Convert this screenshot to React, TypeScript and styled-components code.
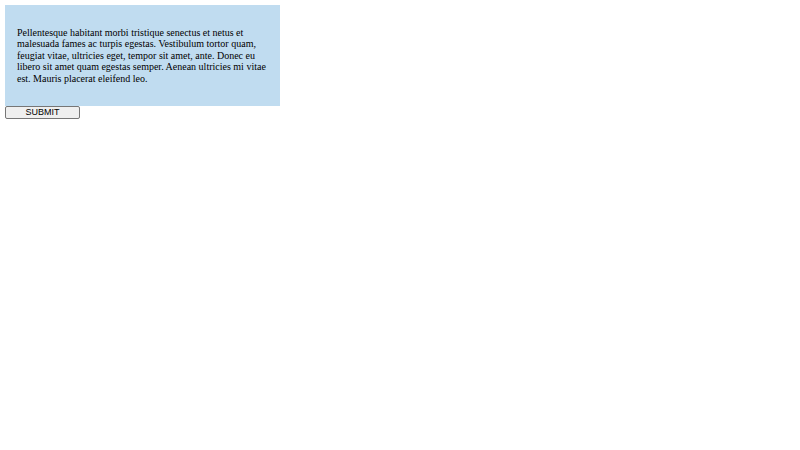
import styled, { createGlobalStyle } from "styled-components";

const GlobalStyle = createGlobalStyle`
  body {
    margin: 5px;
    font-family: "Liberation Serif", "Times New Roman", serif;
    background: #ffffff;
  }
`;

const Panel = styled.div`
  width: 275px;
  box-sizing: border-box;
  padding: 12px;
  background-color: #c0dcf0;
`;

const Copy = styled.p`
  margin: 10px 0;
  font-size: 10px;
  line-height: 11.4px;
  color: #000000;
`;

const SubmitButton = styled.button`
  display: block;
  width: 75px;
  height: 13px;
  padding: 0;
  margin: 0;
  font-family: "Liberation Sans", Arial, sans-serif;
  font-size: 9px;
  line-height: 11px;
  color: #000000;
  background-color: #efefef;
  border: 1px solid #767676;
  border-radius: 2px;
`;

const App = () => {
  return (
    <>
      <GlobalStyle />
      <Panel>
        <Copy>
          Pellentesque habitant morbi tristique senectus et netus et malesuada
          fames ac turpis egestas. Vestibulum tortor quam, feugiat vitae,
          ultricies eget, tempor sit amet, ante. Donec eu libero sit amet quam
          egestas semper. Aenean ultricies mi vitae est. Mauris placerat
          eleifend leo.
        </Copy>
      </Panel>
      <SubmitButton>SUBMIT</SubmitButton>
    </>
  );
};

export default App;
